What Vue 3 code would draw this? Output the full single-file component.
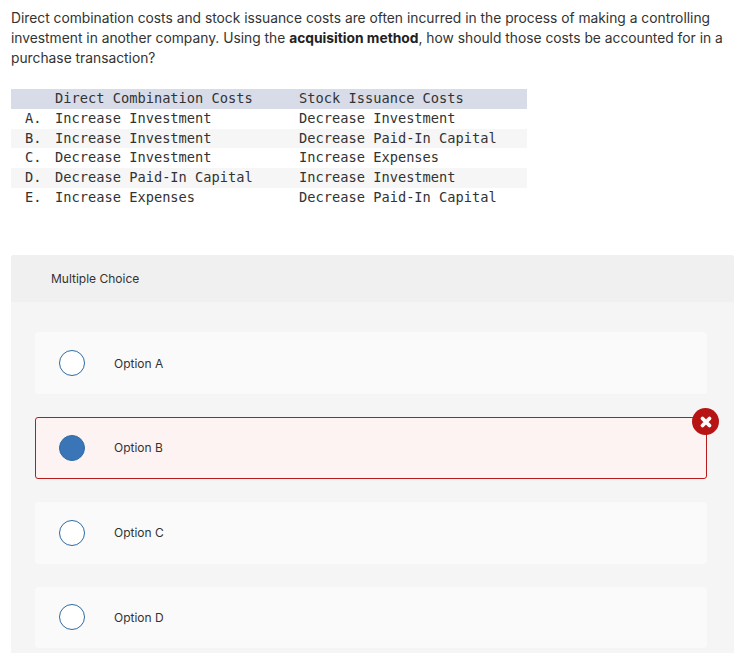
<script setup>
const rows = [
  { letter: 'A.', direct: 'Increase Investment', stock: 'Decrease Investment' },
  { letter: 'B.', direct: 'Increase Investment', stock: 'Decrease Paid-In Capital' },
  { letter: 'C.', direct: 'Decrease Investment', stock: 'Increase Expenses' },
  { letter: 'D.', direct: 'Decrease Paid-In Capital', stock: 'Increase Investment' },
  { letter: 'E.', direct: 'Increase Expenses', stock: 'Decrease Paid-In Capital' }
]

const options = [
  { label: 'Option A', selected: false },
  { label: 'Option B', selected: true },
  { label: 'Option C', selected: false },
  { label: 'Option D', selected: false }
]
</script>

<template>
  <div class="page">
    <p class="question">
      Direct combination costs and stock issuance costs are often incurred in the process of making a controlling
      investment in another company. Using the <b>acquisition method</b>, how should those costs be accounted for in a
      purchase transaction?
    </p>

    <div class="costTable">
      <div class="row head">
        <span class="letter"></span>
        <span class="direct">Direct Combination Costs</span>
        <span>Stock Issuance Costs</span>
      </div>
      <div v-for="(row, i) in rows" :key="row.letter" class="row" :class="{ striped: i % 2 === 1 }">
        <span class="letter">{{ row.letter }}</span>
        <span class="direct">{{ row.direct }}</span>
        <span>{{ row.stock }}</span>
      </div>
    </div>

    <section class="panel">
      <div class="panelHead">Multiple Choice</div>
      <div class="optionList">
        <div v-for="opt in options" :key="opt.label" class="option" :class="{ wrong: opt.selected }">
          <span class="radio" :class="{ filled: opt.selected }"></span>
          <span class="optionLabel">{{ opt.label }}</span>
          <span v-if="opt.selected" class="badge">
            <svg width="14" height="14" viewBox="0 0 14 14">
              <path d="M3.5 3.5 L10.5 10.5 M10.5 3.5 L3.5 10.5" stroke="#fff" stroke-width="3.8" stroke-linecap="round" />
            </svg>
          </span>
        </div>
      </div>
    </section>
  </div>
</template>

<style>
html,
body {
  background: #fff;
  overflow: hidden;
}
</style>

<style scoped>
.page {
  width: 736px;
  height: 653px;
  overflow: hidden;
  padding: 8px 2px 0 11px;
  box-sizing: border-box;
  font-family: Inter, 'Liberation Sans', sans-serif;
  color: #333;
}

.question {
  margin: 0;
  font-size: 13.8px;
  line-height: 20px;
  width: 722px;
}

.question b {
  font-weight: 700;
  color: #222;
}

.costTable {
  width: 516px;
  margin-top: 21px;
  font-family: 'DejaVu Sans Mono', monospace;
  font-size: 13.7px;
  color: #333;
}

.row {
  display: flex;
  height: 19.67px;
  line-height: 19.67px;
}

.head {
  background: #d8dce8;
  height: 20px;
  line-height: 18px;
}

.striped {
  background: #f6f6f6;
}

.letter {
  width: 44px;
  padding-left: 14px;
  box-sizing: border-box;
}

.direct {
  width: 244px;
}

.panel {
  margin-top: 48px;
  width: 723px;
  height: 398px;
  background: #f5f5f5;
  border-radius: 3px 3px 0 0;
}

.panelHead {
  height: 47px;
  line-height: 47px;
  padding-left: 40px;
  background: #f0f0f0;
  border-radius: 3px 3px 0 0;
  font-size: 12px;
}

.optionList {
  display: flex;
  flex-direction: column;
  gap: 23px;
  padding: 30px 27px 0 24px;
}

.option {
  position: relative;
  display: flex;
  align-items: center;
  height: 61.75px;
  box-sizing: border-box;
  padding-left: 23px;
  background: #fafafa;
  border: 1px solid #fafafa;
  border-radius: 3px;
  font-size: 12px;
}

.wrong {
  background: #fdf3f2;
  border-color: #b71c1c;
}

.radio {
  width: 26px;
  height: 26px;
  box-sizing: border-box;
  border: 1px solid #2f6aa3;
  border-radius: 50%;
  background: #fff;
  flex-shrink: 0;
}

.filled {
  background: #3a75b8;
}

.optionLabel {
  margin-left: 29px;
}

.badge {
  position: absolute;
  top: -10px;
  right: -13px;
  width: 27px;
  height: 27px;
  border-radius: 50%;
  background: #b71515;
  display: flex;
  align-items: center;
  justify-content: center;
}
</style>
